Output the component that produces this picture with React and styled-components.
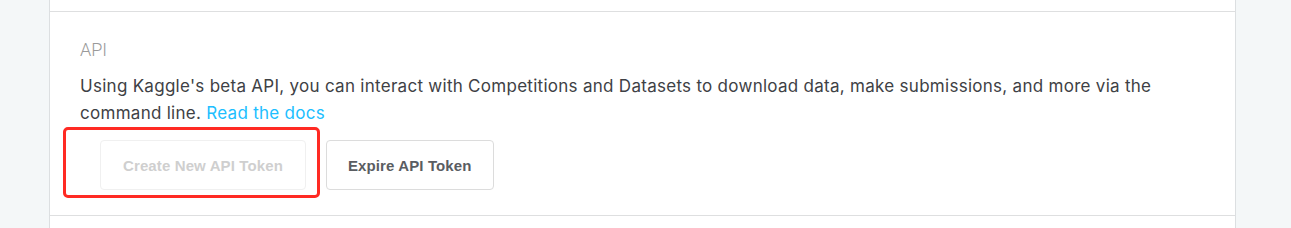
import React from "react";
import styled, { createGlobalStyle } from "styled-components";

const Global = createGlobalStyle`
  html, body { margin: 0; padding: 0; background: #f4f7f8; }
  body { font-family: Inter, "Liberation Sans", Arial, sans-serif; }
`;

const Page = styled.div`
  display: flex;
  justify-content: flex-start;
  padding-left: 49px;
  height: 228px;
  overflow: hidden;
`;

const Column = styled.div`
  width: 1187px;
  background: #fff;
  border-left: 1px solid #dcdfe1;
  border-right: 1px solid #dcdfe1;
  box-sizing: border-box;
  padding-top: 11px;
`;

const Section = styled.section`
  border-top: 1px solid #dedfe0;
  border-bottom: 1px solid #dedfe0;
  padding: 26px 30px 25px 30px;
`;

const Heading = styled.h2`
  margin: 0 0 11px;
  font-family: Roboto, "Liberation Sans", Arial, sans-serif;
  font-size: 18px;
  font-weight: 300;
  line-height: 24px;
  color: #9a9a9a;
`;

const Text = styled.p`
  margin: 0;
  font-family: Inter, "Liberation Sans", Arial, sans-serif;
  font-size: 17px;
  line-height: 27px;
  letter-spacing: 0.28px;
  color: #3e4145;
`;

const Link = styled.a`
  color: #20beff;
  text-decoration: none;
`;

const Actions = styled.div`
  display: flex;
  gap: 20px;
  margin-top: 13px;
  padding-left: 20px;
`;

const Highlight = styled.div`
  position: relative;
  &::after {
    content: "";
    position: absolute;
    left: -37px;
    top: -13px;
    right: -14px;
    bottom: -8px;
    border: 3px solid #ff2a23;
    border-radius: 5px;
    pointer-events: none;
  }
`;

const Button = styled.button`
  height: 50px;
  padding: 0 ${(p) => (p.$disabled ? 22 : 21)}px;
  font-family: "Liberation Sans", Arial, sans-serif;
  font-size: 15px;
  font-weight: 700;
  letter-spacing: 0.12px;
  background: #fff;
  border-radius: 4px;
  border: 1px solid ${(p) => (p.$disabled ? "#f0f0f0" : "#dcdcdc")};
  color: ${(p) => (p.$disabled ? "#cfcfcf" : "#5a5d62")};
  cursor: ${(p) => (p.$disabled ? "default" : "pointer")};
`;

export default function App() {
  return (
    <>
      <Global />
      <Page>
        <Column>
          <Section>
            <Heading>API</Heading>
            <Text>
              Using Kaggle's beta API, you can interact with Competitions and Datasets to download
              data, make submissions, and more via the command line.{" "}
              <Link href="#">Read the docs</Link>
            </Text>
            <Actions>
              <Highlight>
                <Button $disabled disabled>
                  Create New API Token
                </Button>
              </Highlight>
              <Button>Expire API Token</Button>
            </Actions>
          </Section>
        </Column>
      </Page>
    </>
  );
}
